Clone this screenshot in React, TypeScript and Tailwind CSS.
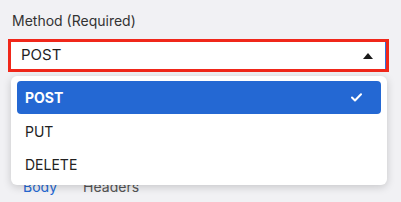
import React from "react";

export default function App() {
  const options = ["POST", "PUT", "DELETE"];
  return (
    <div
      className="relative w-[401px] h-[202px] overflow-hidden bg-[#f1f1f4] text-[#222]"
      style={{ fontFamily: "Inter, 'Noto Sans', sans-serif" }}
    >
      <div className="pl-3 pt-[12px] text-[14px] leading-[17px] text-[#333]">Method (Required)</div>

      {/* Select field with red highlight */}
      <div className="ml-2 mt-[10px] w-[381px] h-[33px] border-[3px] border-[#f0271a] bg-white">
        <div className="flex h-full items-center justify-between pl-[10px] pr-[12px] border-r border-[#2f6fe0]">
          <span className="text-[15px] text-[#1f1f1f]">POST</span>
          <svg width="10" height="6" viewBox="0 0 10 6">
            <path d="M0 6 L5 0 L10 6 Z" fill="#1a1a1a" />
          </svg>
        </div>
      </div>

      {/* Tabs underneath */}
      <div className="flex gap-[26px] pl-[23px] pt-[104px] text-[14px]">
        <span className="text-[#2468d3]">Body</span>
        <span className="text-[#555]">Headers</span>
      </div>

      {/* Dropdown menu */}
      <div className="absolute left-[11px] top-[76px] w-[376px] h-[109px] rounded-[6px] bg-white px-[6px] pt-[5px] shadow-[0_2px_8px_rgba(0,0,0,0.18)]">
        {options.map((o, i) => (
          <div
            key={o}
            className={
              i === 0
                ? "flex h-[33px] items-center justify-between rounded-[4px] bg-[#2468d3] pl-[8px] pr-[19px] text-[14px] font-bold text-white"
                : "flex h-[33px] items-center pl-[8px] pt-[1px] text-[14px] text-[#222]"
            }
          >
            <span>{o}</span>
            {i === 0 && (
              <svg width="11" height="9" viewBox="0 0 11 9">
                <path d="M1 4.5 L4 7.5 L10 1.2" stroke="white" strokeWidth="2" fill="none" strokeLinecap="round" strokeLinejoin="round" />
              </svg>
            )}
          </div>
        ))}
      </div>
    </div>
  );
}
